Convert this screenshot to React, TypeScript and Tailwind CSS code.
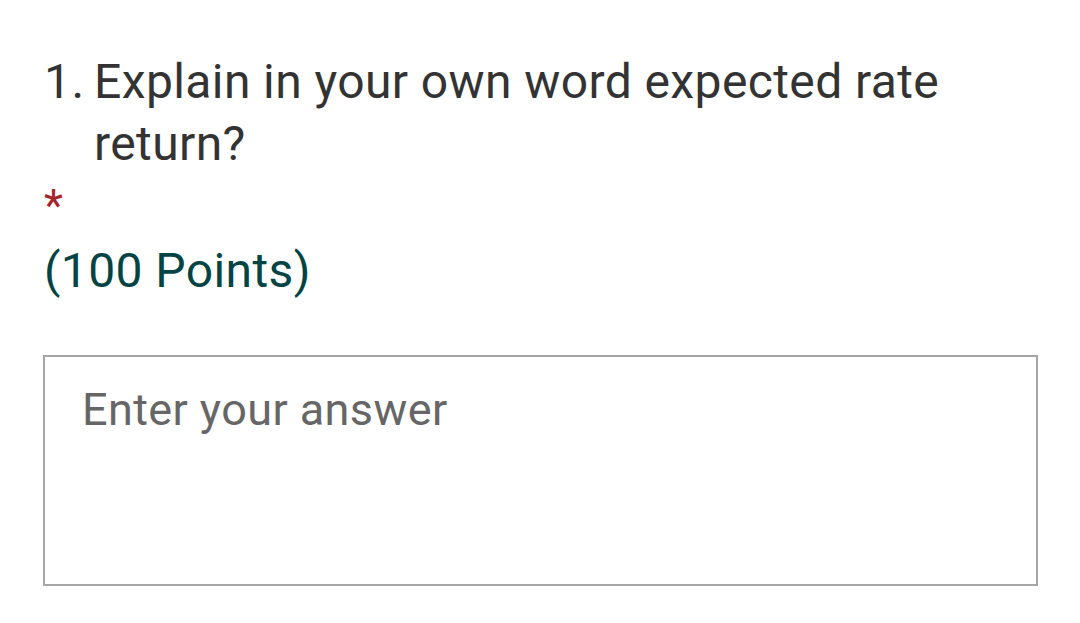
import React from "react";

export default function App() {
  return (
    <div className="w-[1080px] h-[623px] bg-white overflow-hidden" style={{ fontFamily: "Roboto, 'Noto Sans', sans-serif" }}>
      <div className="pl-[44px] pr-[42px] pt-[51px]">
        <div className="flex text-[48px] leading-[62px] tracking-[0.4px] text-[#333333]">
          <span className="w-[50px] shrink-0">1.</span>
          <span>Explain in your own word expected rate return?</span>
        </div>
        <div className="text-[#a4262c] text-[44px] leading-[40px] h-[36px] mt-[11px]">*</div>
        <div className="text-[#024444] text-[48px] leading-[62px] tracking-[0.4px] mt-[18px]">(100 Points)</div>
        <div className="mt-[53px] ml-[-1px] w-[995px] h-[231px] border-2 border-[#a6a6a6] px-[37px] pt-[27px]">
          <div className="text-[#666666] text-[45px] leading-[52px] tracking-[0.4px]">Enter your answer</div>
        </div>
      </div>
    </div>
  );
}
